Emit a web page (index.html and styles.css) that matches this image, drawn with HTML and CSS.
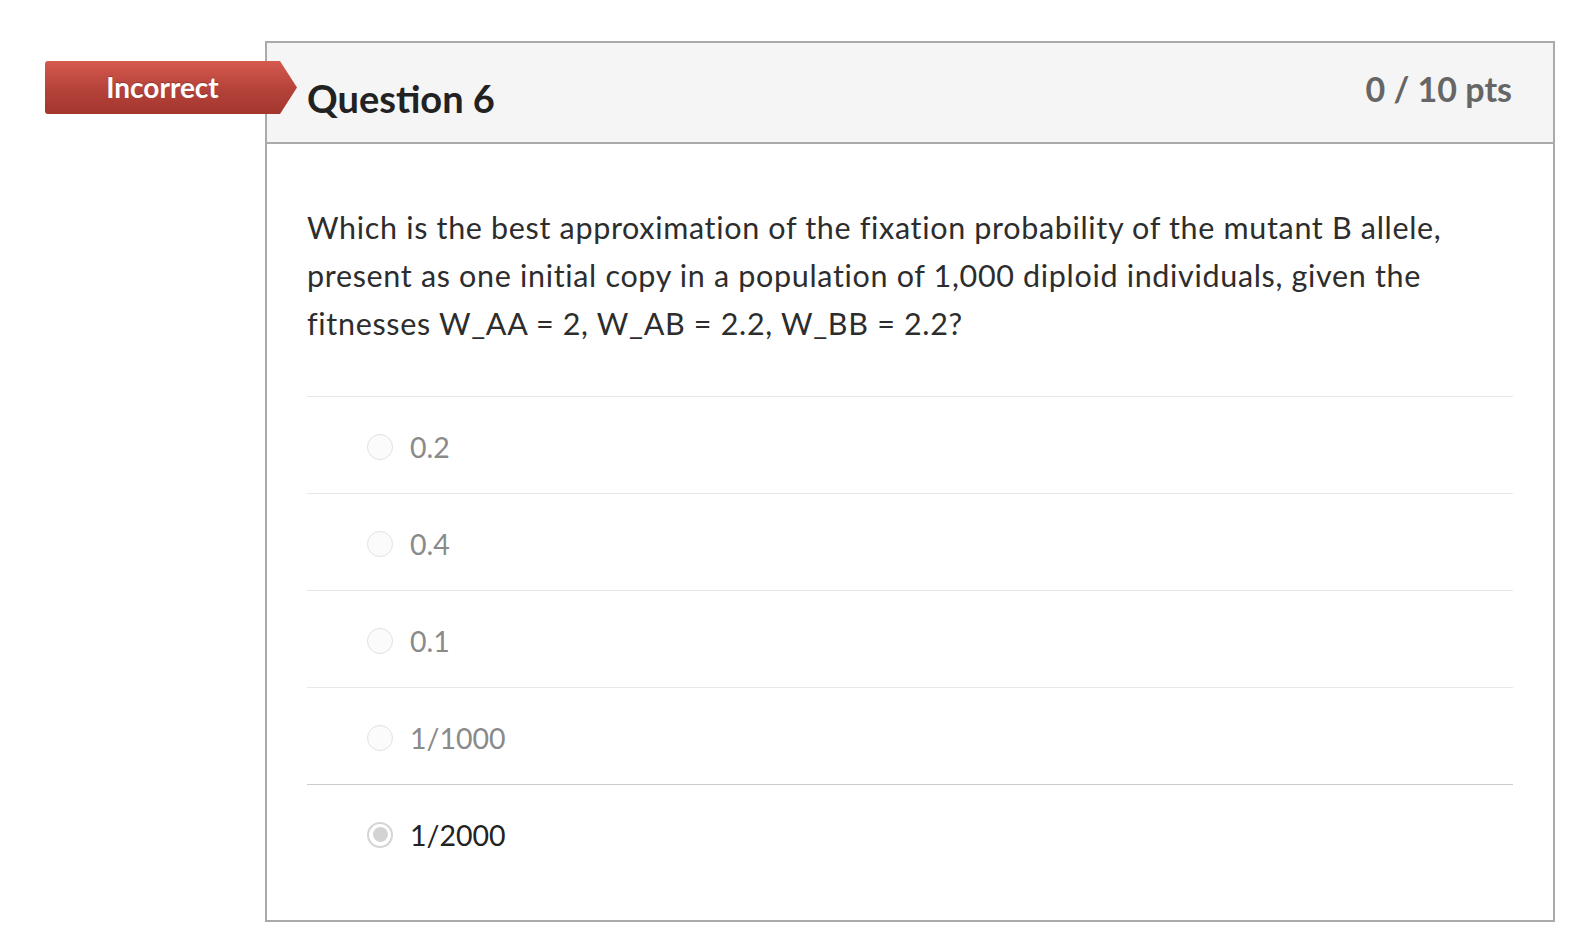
FILE: index.html
```html
<!DOCTYPE html>
<html>
<head>
<meta charset="utf-8">
<link rel="stylesheet" href="styles.css">
</head>
<body>
<div class="page">
  <div class="card">
    <div class="badge"><span>Incorrect</span></div>
    <div class="card-header">
      <div class="title">Question 6</div>
      <div class="pts">0 / 10 pts</div>
    </div>
    <div class="card-body">
      <p class="question">Which is the best approximation of the fixation probability of the mutant B allele, present as one initial copy in a population of 1,000 diploid individuals, given the fitnesses W_AA = 2, W_AB = 2.2, W_BB = 2.2?</p>
      <div class="answers">
        <div class="answer"><span class="radio"></span><span class="label">0.2</span></div>
        <div class="answer"><span class="radio"></span><span class="label">0.4</span></div>
        <div class="answer"><span class="radio"></span><span class="label">0.1</span></div>
        <div class="answer"><span class="radio"></span><span class="label">1/1000</span></div>
        <div class="answer selected"><span class="radio"><span class="dot"></span></span><span class="label">1/2000</span></div>
      </div>
    </div>
  </div>
</div>
</body>
</html>
```
FILE: styles.css
```css
html, body {
  margin: 0;
  padding: 0;
  background: #ffffff;
}
body {
  font-family: Lato, "Noto Sans", sans-serif;
  color: #333333;
}
.page {
  padding: 41px 19px 0 265px;
}
.card {
  position: relative;
  border: 2px solid #aaaaaa;
  background: #ffffff;
}
.badge {
  position: absolute;
  left: -222px;
  top: 18px;
  width: 252px;
  height: 53px;
  background: linear-gradient(#d5594e, #b4423a 55%, #a3362d);
  clip-path: polygon(0 0, 235px 0, 252px 26.5px, 235px 53px, 0 53px);
  border-radius: 3px 0 0 3px;
  display: flex;
  align-items: center;
}
.badge span {
  width: 235px;
  text-align: center;
  color: #ffffff;
  font-weight: 700;
  font-size: 28px;
  text-shadow: 0 -1px 0 rgba(0,0,0,0.25);
  margin-top: -1px;
}
.card-header {
  height: 99px;
  background: #f5f5f5;
  border-bottom: 2px solid #aaaaaa;
  display: flex;
  justify-content: space-between;
  align-items: flex-start;
  padding: 0 41px 0 40px;
}
.title {
  font-size: 38px;
  font-weight: 700;
  color: #222222;
  margin-top: 32px;
}
.pts {
  font-size: 34px;
  font-weight: 700;
  color: #666666;
  margin-top: 25px;
}
.card-body {
  padding: 59px 40px 39px 40px;
}
.question {
  margin: 0 0 49px 0;
  font-size: 30.5px;
  line-height: 48px;
  letter-spacing: 0.67px;
  color: #2d2d2d;
}
.answer {
  border-top: 1.5px solid #e8e8e8;
  display: flex;
  align-items: center;
  padding-left: 60px;
  padding-top: 3px;
  box-sizing: border-box;
  height: 97px;
}
.answer.selected {
  border-top-color: #cccccc;
}
.radio {
  width: 26px;
  height: 26px;
  box-sizing: border-box;
  border-radius: 50%;
  border: 1.5px solid #e2e2e2;
  background: #fbfbfb;
  display: flex;
  align-items: center;
  justify-content: center;
  flex: none;
}
.answer.selected .radio {
  border: 2px solid #d4d4d4;
  background: #ffffff;
}
.dot {
  width: 15px;
  height: 15px;
  border-radius: 50%;
  background: #d3d3d3;
}
.label {
  margin-left: 17px;
  font-size: 28.5px;
  color: #8a8a8a;
}
.answer.selected .label {
  color: #222222;
}
```
